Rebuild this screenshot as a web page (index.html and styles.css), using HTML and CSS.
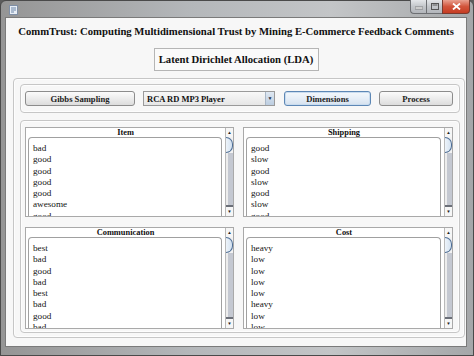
FILE: index.html
```html
<!DOCTYPE html>
<html lang="en">
<head>
    <meta charset="UTF-8">
    <title>CommTrust</title>
    <link rel="stylesheet" href="styles.css">
</head>
<body>
    <div class="window">
        <div class="titlebar">
            <svg class="app-icon" width="9" height="10" viewBox="0 0 9 10">
                <rect x="0.5" y="0.5" width="8" height="9" fill="#e8eef6" stroke="#7f8fa6"/>
                <path d="M2 3h5M2 5h5M2 7h3" stroke="#6d86a8" stroke-width="1"/>
            </svg>
            <div class="caption">
                <span class="cap-btn cap-min">
                    <svg width="8" height="6" viewBox="0 0 8 6"><rect x="0" y="3" width="8" height="2" fill="#fff" stroke="#555" stroke-width="0.6"/></svg>
                </span>
                <span class="cap-btn cap-max">
                    <svg width="8" height="7" viewBox="0 0 8 7"><rect x="0.5" y="0.5" width="7" height="6" fill="none" stroke="#555"/><rect x="1.5" y="1.5" width="5" height="1" fill="#555"/></svg>
                </span>
                <span class="cap-btn cap-close">
                    <svg width="9" height="7" viewBox="0 0 9 7"><path d="M1 0.5L8 6.5M8 0.5L1 6.5" stroke="#fff" stroke-width="1.8"/></svg>
                </span>
            </div>
        </div>

        <div class="client">
            <h1>CommTrust: Computing Multidimensional Trust by Mining E-Commerce Feedback Comments</h1>
            <div class="lda">Latent Dirichlet Allocation (LDA)</div>

            <div class="main-panel">
                <div class="toolbar">
                    <button class="btn btn-gibbs">Gibbs Sampling</button>
                    <div class="combo">
                        <span class="combo-text">RCA RD MP3 Player</span>
                        <span class="combo-arrow">▼</span>
                    </div>
                    <button class="btn btn-dim focused">Dimensions</button>
                    <button class="btn btn-proc">Process</button>
                </div>

                <div class="lists">
                    <div class="listbox">
                        <div class="pane">
                            <div class="list-title">Item</div>
                            <ul class="list-body">
                                <li>bad</li><li>good</li><li>good</li><li>good</li><li>good</li><li>awesome</li><li>good</li>
                            </ul>
                        </div>
                        <div class="scrollbar">
                            <span class="sb-up">▲</span><span class="sb-thumb"></span><span class="sb-track"></span><span class="sb-down">▼</span>
                        </div>
                    </div>
                    <div class="listbox">
                        <div class="pane">
                            <div class="list-title">Shipping</div>
                            <ul class="list-body">
                                <li>good</li><li>slow</li><li>good</li><li>slow</li><li>good</li><li>slow</li><li>good</li>
                            </ul>
                        </div>
                        <div class="scrollbar">
                            <span class="sb-up">▲</span><span class="sb-thumb"></span><span class="sb-track"></span><span class="sb-down">▼</span>
                        </div>
                    </div>
                    <div class="listbox">
                        <div class="pane">
                            <div class="list-title">Communication</div>
                            <ul class="list-body">
                                <li>best</li><li>bad</li><li>good</li><li>bad</li><li>best</li><li>bad</li><li>good</li><li>bad</li>
                            </ul>
                        </div>
                        <div class="scrollbar">
                            <span class="sb-up">▲</span><span class="sb-thumb"></span><span class="sb-track"></span><span class="sb-down">▼</span>
                        </div>
                    </div>
                    <div class="listbox">
                        <div class="pane">
                            <div class="list-title">Cost</div>
                            <ul class="list-body">
                                <li>heavy</li><li>low</li><li>low</li><li>low</li><li>low</li><li>heavy</li><li>low</li><li>low</li>
                            </ul>
                        </div>
                        <div class="scrollbar">
                            <span class="sb-up">▲</span><span class="sb-thumb"></span><span class="sb-track"></span><span class="sb-down">▼</span>
                        </div>
                    </div>
                </div>
            </div>
        </div>
    </div>
</body>
</html>
```

FILE: styles.css
```css
/* Base */
* {
    margin: 0;
    padding: 0;
    box-sizing: border-box;
}

body {
    width: 474px;
    height: 356px;
    background: #5c5c5c;
    font-family: "Liberation Serif", "Times New Roman", serif;
    color: #111;
    overflow: hidden;
}

/* Window frame */
.window {
    width: 474px;
    height: 356px;
    border: 1px solid #4a4a4a;
    border-radius: 6px 6px 0 0;
    background: linear-gradient(to right, #959595, #b4b7ba 40%, #c3c5c7 70%, #a5a7a9);
    padding: 0 6px 8px 4px;
    display: flex;
    flex-direction: column;
}

.titlebar {
    height: 16px;
    display: flex;
    align-items: flex-start;
    position: relative;
}

.app-icon {
    margin: 4px 0 0 4px;
}

/* Caption buttons */
.caption {
    position: absolute;
    right: -3px;
    top: -1px;
    display: flex;
}

.cap-btn {
    height: 14px;
    display: flex;
    align-items: center;
    justify-content: center;
    border: 1px solid #6d6f73;
    border-top: none;
}

.cap-min, .cap-max {
    width: 16px;
    background: linear-gradient(#e4e6e9, #c3c6ca 50%, #b2b5ba);
    border-right: none;
}

.cap-min {
    border-radius: 0 0 0 4px;
}

.cap-close {
    width: 28px;
    background: linear-gradient(#e9a190, #d2553c 50%, #c63c22);
    border-radius: 0 0 4px 0;
    border-color: #7a3a2e;
}

/* Client area */
.client {
    flex: 1;
    background: #f7f7f7;
    border: 1px solid #7a7a7a;
    display: flex;
    flex-direction: column;
    align-items: center;
}

h1 {
    font-size: 10.7px;
    font-weight: bold;
    line-height: 13px;
    margin-top: 7px;
    color: #111;
    white-space: nowrap;
}

.lda {
    margin-top: 10px;
    width: 165px;
    height: 23px;
    border: 1px solid #b5b5b5;
    background: #fafafa;
    font-size: 10.7px;
    font-weight: bold;
    line-height: 21px;
    text-align: center;
}

/* Panels */
.main-panel {
    align-self: stretch;
    margin: 7px 1px 8px 7px;
    height: 260px;
    border: 1px solid #c6c6c6;
    border-radius: 4px;
    padding: 5px 4px 4px 6px;
    box-shadow: inset 0 0 0 1px #fdfdfd;
}

.toolbar {
    height: 29px;
    border: 1px solid #c6c6c6;
    border-radius: 4px;
    padding: 6px 0 0 4px;
    display: flex;
    box-shadow: inset 0 0 0 1px #fdfdfd;
}

.btn {
    height: 15px;
    border: 1px solid #8c8c8c;
    border-radius: 3px;
    background: linear-gradient(#fbfbfb, #ececec 50%, #dcdcdc);
    font-family: "Liberation Serif", serif;
    font-size: 8.6px;
    font-weight: bold;
    color: #222;
}

.btn-gibbs {
    width: 110px;
}

.btn-dim {
    width: 87px;
    margin-left: 9px;
}

.btn-proc {
    width: 74px;
    margin-left: 8px;
}

.btn.focused {
    border-color: #5d87b5;
    background: linear-gradient(#f4f8fc, #e6eef7 50%, #d5e1ee);
    box-shadow: inset 0 0 0 1px #c9dcef;
}

.combo {
    width: 132px;
    height: 15px;
    margin-left: 8px;
    border: 1px solid #9a9a9a;
    background: linear-gradient(#f8f8f8, #e6e6e6);
    display: flex;
    align-items: center;
    justify-content: space-between;
}

.combo-text {
    font-size: 8.5px;
    font-weight: bold;
    padding-left: 3px;
}

.combo-arrow {
    width: 9px;
    height: 13px;
    border-left: 1px solid #a9b7c7;
    background: linear-gradient(#dfe8f2, #bccde0);
    font-size: 5px;
    line-height: 13px;
    text-align: center;
    color: #1f2f45;
}

/* Lists */
.lists {
    margin-top: 7px;
    height: 213px;
    border: 1px solid #c6c6c6;
    border-radius: 4px;
    padding: 6px 6px 3px 4px;
    display: grid;
    grid-template-columns: 209px 210px;
    grid-template-rows: 90px 102px;
    column-gap: 9px;
    row-gap: 10px;
    box-shadow: inset 0 0 0 1px #fdfdfd;
}

.listbox {
    border: 1px solid #a9a9a9;
    background: #fff;
    display: flex;
    overflow: hidden;
}

.pane {
    flex: 1;
    overflow: hidden;
    min-width: 0;
}

.list-title {
    height: 9px;
    font-size: 8.4px;
    font-weight: bold;
    line-height: 9px;
    text-align: center;
}

.list-body {
    list-style: none;
    margin: 0 3px 0 2px;
    border: 1px solid #a0a0a0;
    border-bottom: none;
    border-radius: 4px 4px 0 0;
    padding: 5px 4px;
    font-size: 9.2px;
    line-height: 11.3px;
    color: #151515;
}

/* Scrollbar */
.scrollbar {
    width: 8px;
    display: flex;
    flex-direction: column;
    border-left: 1px solid #b9b9b9;
    background: #f2f2f2;
}

.sb-up, .sb-down {
    height: 9px;
    font-size: 4.5px;
    line-height: 9px;
    text-align: center;
    color: #222;
    background: #f6f6f6;
}

.sb-thumb {
    height: 16px;
    border: 1px solid #4d6d95;
    border-left: none;
    border-radius: 0 8px 8px 0;
    background: linear-gradient(to right, #eef4fa, #d3e1f0);
}

.sb-track {
    flex: 1;
    background: linear-gradient(to right, #ededed 0 2px, #c4c8d1 2px);
    border-bottom: 2px solid #6b6f78;
}
```
